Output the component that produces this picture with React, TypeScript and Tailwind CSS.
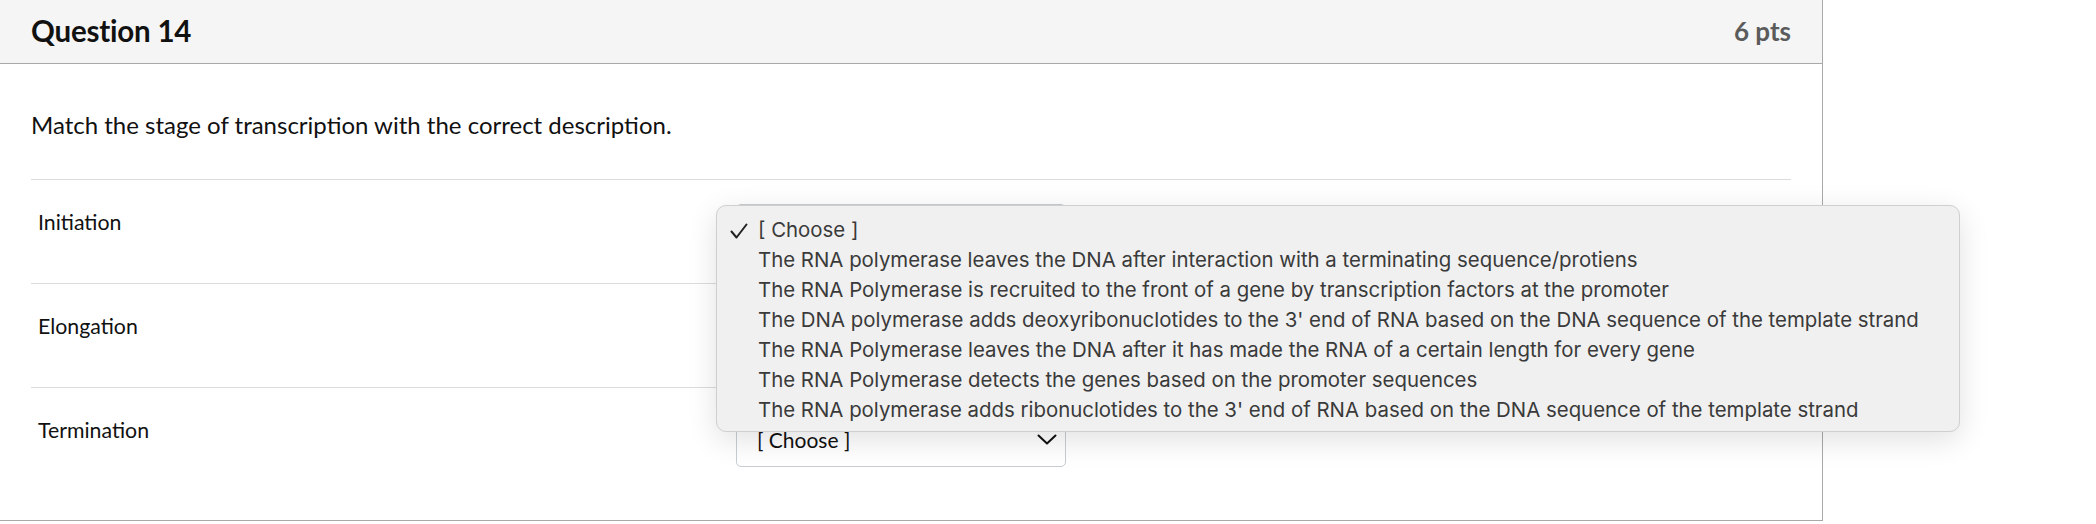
import React from 'react';

const stages = ['Initiation', 'Elongation', 'Termination'];

const options = [
  '[ Choose ]',
  'The RNA polymerase leaves the DNA after interaction with a terminating sequence/protiens',
  'The RNA Polymerase is recruited to the front of a gene by transcription factors at the promoter',
  "The DNA polymerase adds deoxyribonuclotides to the 3' end of RNA based on the DNA sequence of the template strand",
  'The RNA Polymerase leaves the DNA after it has made the RNA of a certain length for every gene',
  'The RNA Polymerase detects the genes based on the promoter sequences',
  "The RNA polymerase adds ribonuclotides to the 3' end of RNA based on the DNA sequence of the template strand",
];

function Chevron() {
  return (
    <svg width="20" height="11" viewBox="0 0 20 11" fill="none">
      <polyline points="1.5,1.5 10,9.5 18.5,1.5" stroke="#111" strokeWidth="2" strokeLinecap="round" strokeLinejoin="round" />
    </svg>
  );
}

// selects under the open menu are hidden behind it
function SelectBox({ covered }: { covered: boolean }) {
  return (
    <div className="w-[330px] h-[55px] border border-[#c7cdd1] rounded-[5px] bg-white flex items-center justify-between pl-[20px] pr-[8px]">
      <span className={'text-[21px] text-[#111] ' + (covered ? 'invisible' : '')}>[ Choose ]</span>
      <Chevron />
    </div>
  );
}

export default function App() {
  return (
    <div className="relative w-[2096px] h-[524px] bg-white overflow-hidden font-['Lato','Liberation_Sans',sans-serif]">
      <div className="w-[1823px] border-r border-b border-[#a9a9a9]">
        {/* header */}
        <div className="h-[64px] bg-[#f5f5f5] border-b border-[#a9a9a9] flex items-center justify-between px-[31px]">
          <h2 className="text-[29.5px] font-bold text-[#111] tracking-[-0.2px]">Question 14</h2>
          <span className="text-[26px] font-bold text-[#5b5b5b]">6 pts</span>
        </div>

        <div className="px-[31px]">
          <p className="text-[24px] text-[#111] pt-[47px] pb-[40px] leading-[28px]">
            Match the stage of transcription with the correct description.
          </p>
          {stages.map((stage, i) => (
            <div
              key={stage}
              className={
                'border-t border-[#dcdcdc] flex items-start ' +
                (i === stages.length - 1 ? 'pt-[24px] pb-[53px]' : 'py-[24px]')
              }
            >
              <div className="w-[705px] pl-[7px] pt-[5px] text-[21.3px] leading-[26px] text-[#111]">{stage}</div>
              <SelectBox covered={i < stages.length - 1} />
            </div>
          ))}
        </div>
      </div>

      {/* open dropdown menu */}
      <div className="absolute left-[716px] top-[205px] w-[1244px] h-[227px] rounded-[10px] bg-[#f0f0f0] border border-[#cfcfcf] shadow-[0_8px_30px_rgba(0,0,0,0.12)] pt-[9.5px] font-['Inter','Roboto',sans-serif] text-[20.4px] text-[#3a3a3a]">
        {options.map((opt, i) => (
          <div key={i} className="h-[30px] flex items-center">
            <span className="w-[41px] flex justify-center pl-[3px]">
              {i === 0 && (
                <svg width="18" height="16" viewBox="0 0 18 16" fill="none">
                  <polyline points="1.5,8.5 6.5,14.5 16.5,1.5" stroke="#222" strokeWidth="2" strokeLinecap="round" strokeLinejoin="round" />
                </svg>
              )}
            </span>
            <span className="whitespace-nowrap">{opt}</span>
          </div>
        ))}
      </div>
    </div>
  );
}
